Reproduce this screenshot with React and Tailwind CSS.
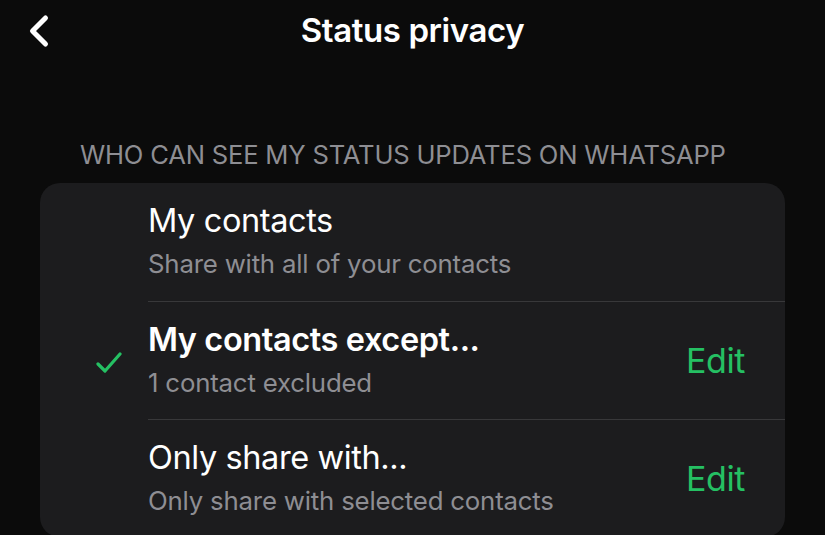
import { ChevronLeft } from "lucide-react";

const rows = [
  { title: "My contacts", sub: "Share with all of your contacts", checked: false, edit: false },
  { title: "My contacts except...", sub: "1 contact excluded", checked: true, edit: true },
  { title: "Only share with...", sub: "Only share with selected contacts", checked: false, edit: true },
];

function Check() {
  return (
    <svg width="26" height="22" viewBox="0 0 26 22" fill="none">
      <path d="M2 12 L9 19 L24 2" stroke="#25c063" strokeWidth="3.2" strokeLinecap="round" strokeLinejoin="round" />
    </svg>
  );
}

export default function App() {
  return (
    <div
      className="w-[825px] h-[535px] overflow-hidden bg-[#0b0b0b] text-white"
      style={{ fontFamily: "Inter, 'Liberation Sans', sans-serif" }}
    >
      {/* header */}
      <div className="relative h-[62px] flex items-center justify-center">
        <ChevronLeft className="absolute left-[13px] top-[5px]" size={52} strokeWidth={2.3} />
        <h1 className="text-[33px] font-semibold tracking-[-0.4px] leading-none pb-[2px]">Status privacy</h1>
      </div>

      <div className="pt-[80px] pl-[80px] text-[25.6px] text-[#8e8e93] leading-none tracking-[-0.2px]">
        WHO CAN SEE MY STATUS UPDATES ON WHATSAPP
      </div>

      <div className="mt-[15px] ml-[40px] w-[745px] rounded-[20px] bg-[#1c1c1e]">
        {rows.map((r, i) => (
          <div key={r.title} className="flex h-[118px]">
            <div className="w-[108px] flex items-center justify-end pr-[26px] pt-[6px]">
              {r.checked && <Check />}
            </div>
            <div className={`flex-1 flex items-center pr-[40px] ${i > 0 ? "border-t border-[#38383a]" : ""}`}>
              <div className="flex-1 pb-[2px]">
                <div className={`text-[32.5px] leading-[38px] tracking-[-0.4px] ${r.checked ? "font-semibold" : ""}`}>
                  {r.title}
                </div>
                <div className="mt-[9px] text-[25.8px] leading-[30px] text-[#8e8e93] tracking-[-0.2px]">{r.sub}</div>
              </div>
              {r.edit && <div className="text-[34px] text-[#25c063] tracking-[-0.4px]">Edit</div>}
            </div>
          </div>
        ))}
      </div>
    </div>
  );
}
